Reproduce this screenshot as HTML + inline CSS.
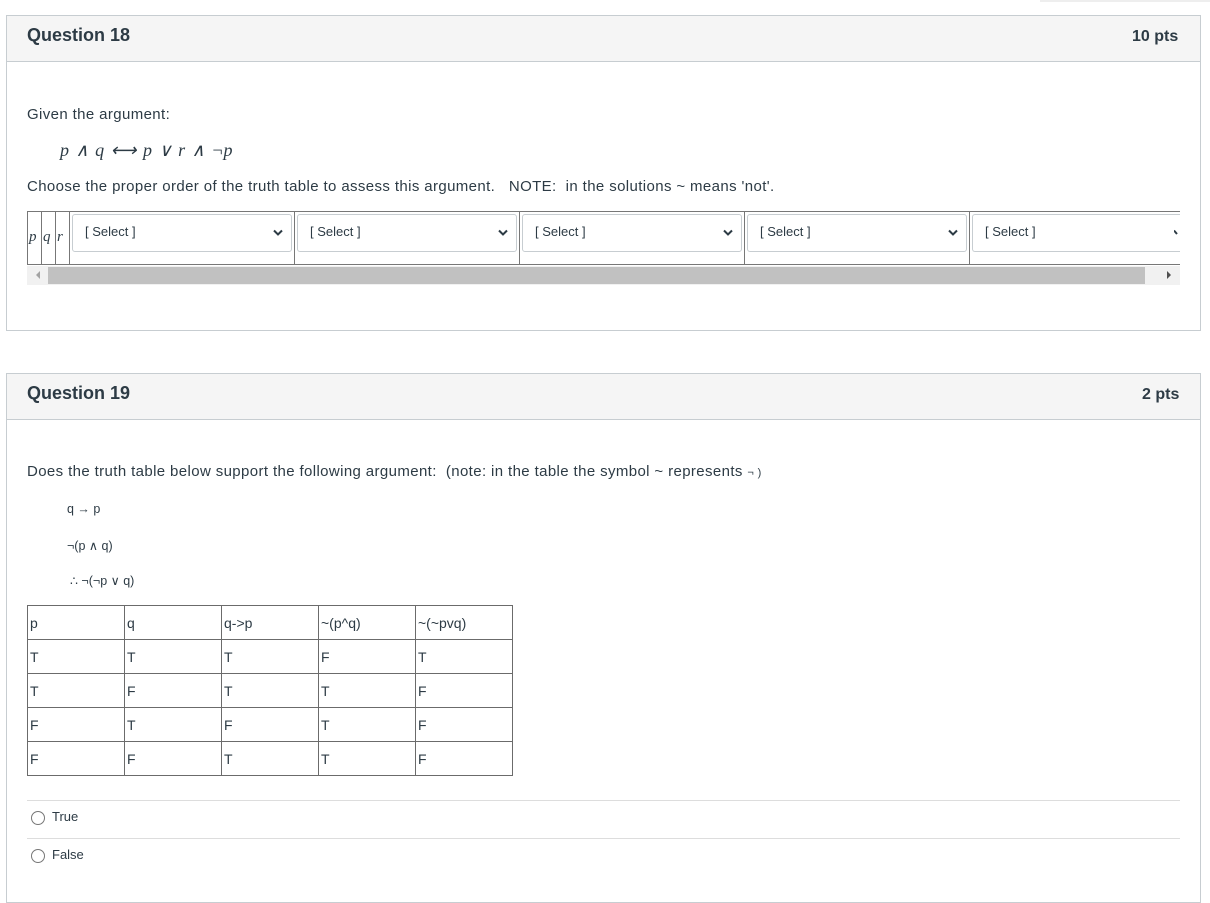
<!DOCTYPE html>
<html><head><meta charset="utf-8"><style>
*{margin:0;padding:0;box-sizing:border-box}
body{width:1210px;height:882px;overflow:hidden;background:#fff;font-family:"Liberation Sans",sans-serif;color:#2d3b45;position:relative}
.a{position:absolute;white-space:nowrap}
.card{position:absolute;left:6px;width:1195px;border:1px solid #c7cdd1;background:#fff}
.hdr{position:absolute;left:0;top:0;right:0;background:#f5f5f5;border-bottom:1px solid #c7cdd1}
.title{font-weight:bold;font-size:18px;color:#2d3b45}
.pts{font-weight:bold;font-size:16px;color:#2d3b45}
.t{font-size:15px;letter-spacing:.38px}
.m{font-family:"Liberation Serif",serif;font-style:italic;font-size:18px;word-spacing:2px}
.sel{position:absolute;top:214px;height:38px;border:1px solid #c7cdd1;border-radius:3px;background:#fff}
.sel span{position:absolute;left:12px;top:9px;font-size:13px;color:#2d3b45}
.chev{position:absolute;right:8px;top:14px}
table.tt{position:absolute;left:27px;top:605px;border-collapse:collapse;font-size:14px;color:#2d3b45}
table.tt td{border:1px solid #6b6b6b;width:97px;height:34px;padding:0 2px;vertical-align:middle}
.radio{position:absolute;width:14px;height:14px;border:1px solid #777;border-radius:50%;left:31px}
</style></head><body>
<div class="a" style="left:1040px;top:0;width:170px;height:2px;background:#eee"></div>

<div class="card" style="top:15px;height:316px">
  <div class="hdr" style="height:46px"></div>
</div>
<div class="a title" style="left:27px;top:25px">Question 18</div>
<div class="a pts" style="left:1132px;top:28px">10 pts</div>
<div class="a t" style="left:27px;top:106px">Given the argument:</div>
<div class="a m" style="left:60px;top:140px">p ∧ q ⟷ p ∨ r ∧ ¬p</div>
<div class="a t" style="left:27px;top:178px">Choose the proper order of the truth table to assess this argument.&nbsp;&nbsp; NOTE:&nbsp; in the solutions ~ means 'not'.</div>

<div class="a" style="left:27px;top:211px;width:1153px;height:54px;border-top:1px solid #777;border-bottom:1px solid #777"></div>
<div class="a" style="left:27px;top:211px;width:1px;height:54px;background:#777"></div>
<div class="a" style="left:41px;top:211px;width:1px;height:54px;background:#777"></div>
<div class="a" style="left:55px;top:211px;width:1px;height:54px;background:#777"></div>
<div class="a" style="left:69px;top:211px;width:1px;height:54px;background:#777"></div>
<div class="a" style="left:294px;top:211px;width:1px;height:54px;background:#777"></div>
<div class="a" style="left:519px;top:211px;width:1px;height:54px;background:#777"></div>
<div class="a" style="left:744px;top:211px;width:1px;height:54px;background:#777"></div>
<div class="a" style="left:969px;top:211px;width:1px;height:54px;background:#777"></div>
<div class="a m" style="left:29px;top:229px;font-size:15px">p</div>
<div class="a m" style="left:43px;top:229px;font-size:15px">q</div>
<div class="a m" style="left:57px;top:229px;font-size:15px">r</div>

<div class="sel" style="left:72px;width:220px"><span>[ Select ]</span><svg class="chev" width="10" height="7" viewBox="0 0 10 7"><path d="M1 1.5L5 5.5L9 1.5" stroke="#2d3b45" stroke-width="2" fill="none"/></svg></div>
<div class="sel" style="left:297px;width:220px"><span>[ Select ]</span><svg class="chev" width="10" height="7" viewBox="0 0 10 7"><path d="M1 1.5L5 5.5L9 1.5" stroke="#2d3b45" stroke-width="2" fill="none"/></svg></div>
<div class="sel" style="left:522px;width:220px"><span>[ Select ]</span><svg class="chev" width="10" height="7" viewBox="0 0 10 7"><path d="M1 1.5L5 5.5L9 1.5" stroke="#2d3b45" stroke-width="2" fill="none"/></svg></div>
<div class="sel" style="left:747px;width:220px"><span>[ Select ]</span><svg class="chev" width="10" height="7" viewBox="0 0 10 7"><path d="M1 1.5L5 5.5L9 1.5" stroke="#2d3b45" stroke-width="2" fill="none"/></svg></div>
<div class="sel" style="left:972px;width:220px;border-right:none;border-radius:3px 0 0 3px"><span>[ Select ]</span></div>
<div class="a" style="left:1180px;top:211px;width:20px;height:60px;background:#fff"></div>
<svg class="a" style="left:1174px;top:229px" width="6" height="7" viewBox="0 0 6 7"><path d="M0 1.5L3 5" stroke="#2d3b45" stroke-width="2" fill="none"/></svg>

<div class="a" style="left:27px;top:266px;width:1153px;height:19px;background:#f1f1f1"></div>
<div class="a" style="left:48px;top:267px;width:1097px;height:17px;background:#c1c1c1"></div>
<svg class="a" style="left:35px;top:271px" width="6" height="8"><path d="M5 0L1 4L5 8Z" fill="#a3a3a3"/></svg>
<svg class="a" style="left:1166px;top:271px" width="6" height="8"><path d="M1 0L5 4L1 8Z" fill="#505050"/></svg>

<div class="card" style="top:373px;height:530px">
  <div class="hdr" style="height:46px"></div>
</div>
<div class="a title" style="left:27px;top:383px">Question 19</div>
<div class="a pts" style="left:1142px;top:386px">2 pts</div>
<div class="a t" style="left:27px;top:463px">Does the truth table below support the following argument:&nbsp; (note: in the table the symbol ~ represents <span style="font-size:11px">¬ )</span></div>
<div class="a" style="left:67px;top:502px;font-size:12.5px">q → p</div>
<div class="a" style="left:67px;top:538px;font-size:12.5px">¬(p ∧ q)</div>
<div class="a" style="left:70px;top:573px;font-size:12.5px">∴ ¬(¬p ∨ q)</div>

<table class="tt">
<tr><td>p</td><td>q</td><td>q-&gt;p</td><td>~(p^q)</td><td>~(~pvq)</td></tr>
<tr><td>T</td><td>T</td><td>T</td><td>F</td><td>T</td></tr>
<tr><td>T</td><td>F</td><td>T</td><td>T</td><td>F</td></tr>
<tr><td>F</td><td>T</td><td>F</td><td>T</td><td>F</td></tr>
<tr><td>F</td><td>F</td><td>T</td><td>T</td><td>F</td></tr>
</table>

<div class="a" style="left:27px;top:800px;width:1153px;height:1px;background:#ddd"></div>
<div class="a" style="left:27px;top:838px;width:1153px;height:1px;background:#ddd"></div>
<div class="radio" style="top:811px"></div>
<div class="a" style="left:52px;top:809px;font-size:13px">True</div>
<div class="radio" style="top:849px"></div>
<div class="a" style="left:52px;top:847px;font-size:13px">False</div>
</body></html>
